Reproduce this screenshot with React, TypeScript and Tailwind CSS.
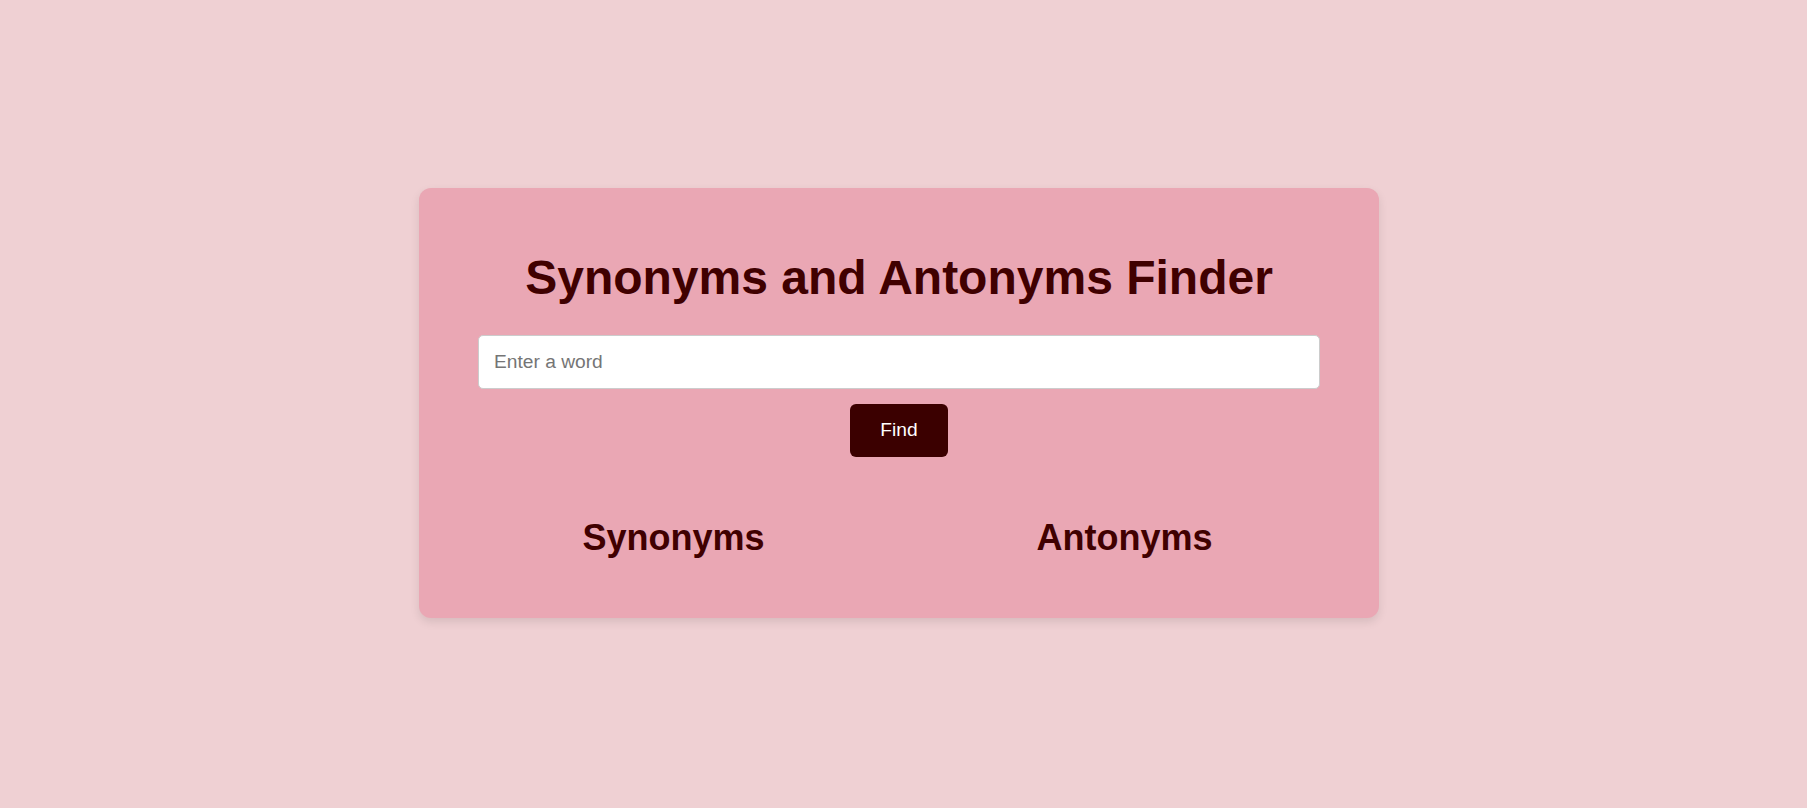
import { useState } from "react";

const App = () => {
  const [word, setWord] = useState<string>("");

  return (
    <div className="flex min-h-screen w-full items-center justify-center bg-[#efd0d3] pr-[9px] pb-[3px] font-['Liberation_Sans',Arial,sans-serif]">
      <div className="flex w-[960px] flex-col rounded-[12px] bg-[#eaa7b4] px-[59px] pt-[62px] pb-[60px] shadow-[0_4px_10px_rgba(0,0,0,0.1)]">
        <h1 className="text-center text-[48px] leading-[55px] font-bold text-[#400000]">
          Synonyms and Antonyms Finder
        </h1>
        <input
          type="text"
          value={word}
          onChange={(e) => setWord(e.target.value)}
          placeholder="Enter a word"
          className="mt-[30px] h-[54px] w-full rounded-[5px] border border-[#cccccc] bg-white px-[15px] text-[19.2px] text-black outline-none placeholder:text-[#757575]"
        />
        <button
          type="button"
          className="mx-auto mt-[15px] h-[53px] w-[98px] cursor-pointer rounded-[6px] bg-[#3b0000] text-[19.2px] text-white"
        >
          Find
        </button>
        <div className="mt-[60px] grid grid-cols-2 gap-[60px]">
          <h2 className="text-center text-[36px] leading-[41px] font-bold text-[#400000]">
            Synonyms
          </h2>
          <h2 className="text-center text-[36px] leading-[41px] font-bold text-[#400000]">
            Antonyms
          </h2>
        </div>
      </div>
    </div>
  );
};

export default App;
